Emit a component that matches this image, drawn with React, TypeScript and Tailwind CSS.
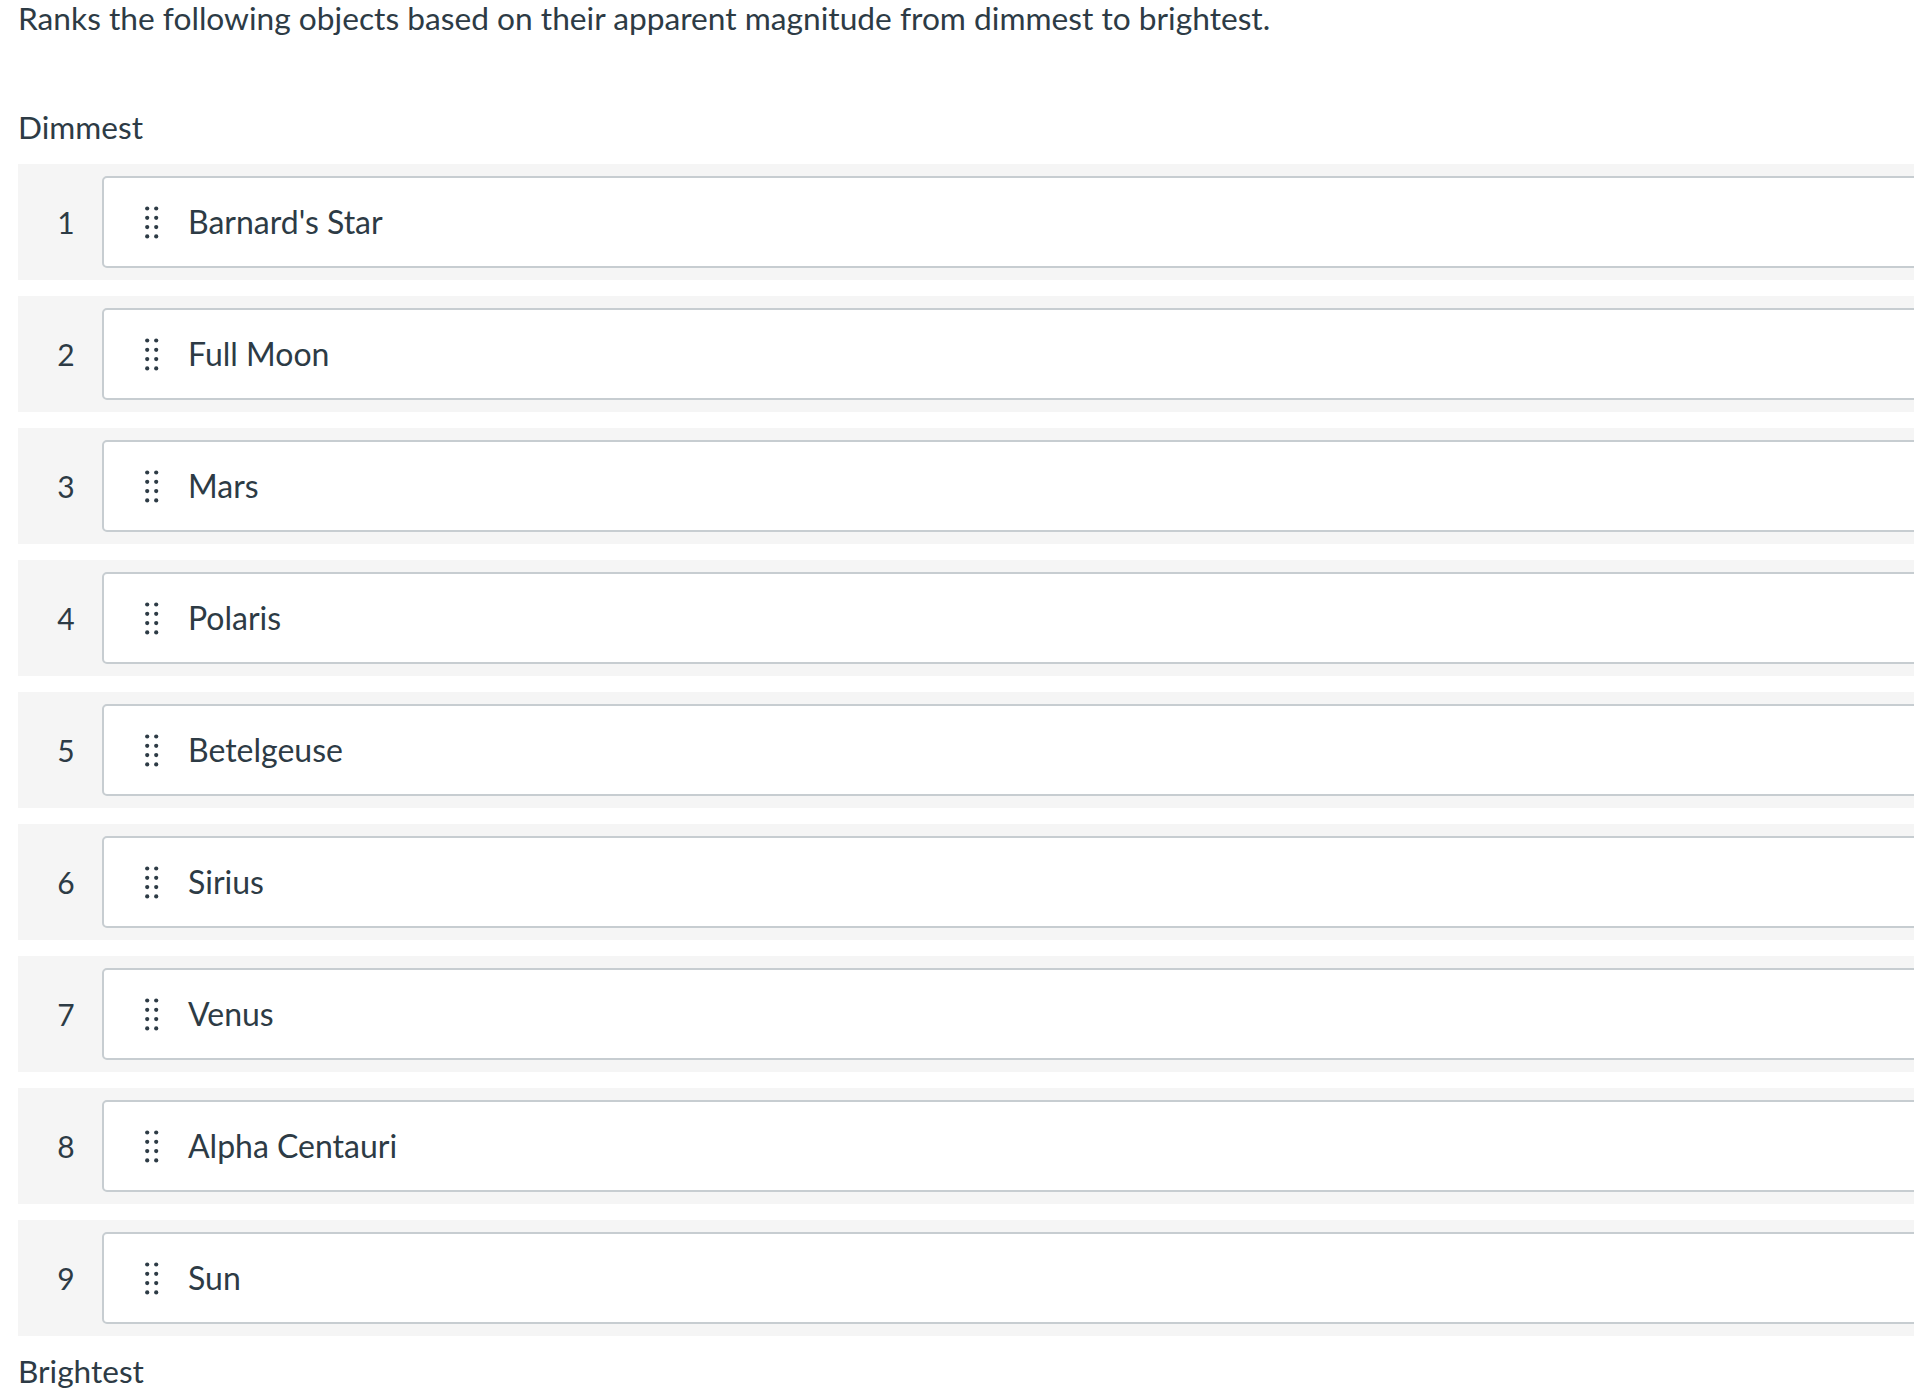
const items = [
  "Barnard's Star",
  "Full Moon",
  "Mars",
  "Polaris",
  "Betelgeuse",
  "Sirius",
  "Venus",
  "Alpha Centauri",
  "Sun",
];

const DragHandle = () => (
  <svg width="14" height="33" viewBox="0 0 14 33" className="shrink-0" fill="#2d3b45">
    {[0, 1, 2, 3].map((r) => (
      <g key={r}>
        <circle cx="2.2" cy={2.5 + r * 9.3} r="2.1" />
        <circle cx="11.2" cy={2.5 + r * 9.3} r="2.1" />
      </g>
    ))}
  </svg>
);

const App = () => {
  return (
    <div className="w-screen min-h-screen overflow-hidden bg-white text-[#2d3b45] font-['Lato','Open_Sans',sans-serif]">
      <div className="w-[2100px] pl-[18px]">
        <p className="mt-[-1px] text-[31.7px] leading-[38px]">
          Ranks the following objects based on their apparent magnitude from dimmest to brightest.
        </p>

        <p className="mt-[71px] text-[31.6px] leading-[38px]">Dimmest</p>

        <ol className="mt-[18px] flex flex-col gap-[16px]">
          {items.map((name, i) => (
            <li key={name} className="flex h-[116px] items-center bg-[#f5f5f5] py-[12px]">
              <span className="w-[84px] pl-[12px] text-center text-[30px]">{i + 1}</span>
              <div className="flex h-[92px] flex-1 items-center gap-[29px] rounded-[5px] border-2 border-[#c7cdd1] bg-white pl-[41px]">
                <DragHandle />
                <span className="text-[32px]">{name}</span>
              </div>
            </li>
          ))}
        </ol>

        <p className="mt-[16px] text-[31.6px] leading-[38px]">Brightest</p>
      </div>
    </div>
  );
};

export default App;
